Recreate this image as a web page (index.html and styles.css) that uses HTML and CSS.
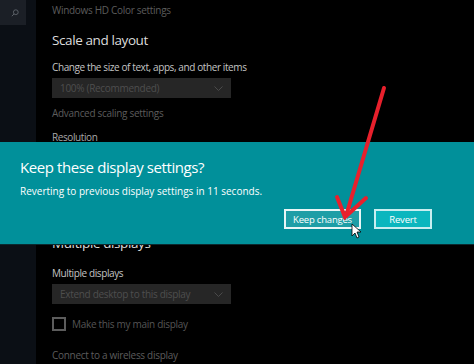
FILE: index.html
```html
<!DOCTYPE html>
<html>
<head>
<meta charset="utf-8">
<link rel="stylesheet" href="styles.css">
</head>
<body>
<div class="screen">
  <aside class="sidebar">
    <div class="search">
      <svg width="8" height="8" viewBox="0 0 8 8"><circle cx="4.8" cy="3.2" r="2.4" fill="none" stroke="#5a5f66" stroke-width="1"/><line x1="3" y1="5" x2="0.8" y2="7.2" stroke="#5a5f66" stroke-width="1"/></svg>
    </div>
  </aside>
  <main class="content">
    <div class="link-dim first">Windows HD Color settings</div>
    <h2 class="heading scale">Scale and layout</h2>
    <div class="label first-label">Change the size of text, apps, and other items</div>
    <div class="select"><span>100% (Recommended)</span><svg width="9" height="5" viewBox="0 0 9 5"><polyline points="0.5,0.5 4.5,4.5 8.5,0.5" fill="none" stroke="#4a4a4a" stroke-width="1"/></svg></div>
    <div class="link-dim adv">Advanced scaling settings</div>
    <div class="label res">Resolution</div>
    <h2 class="heading multi">Multiple displays</h2>
    <div class="label multi-label">Multiple displays</div>
    <div class="select"><span>Extend desktop to this display</span><svg width="9" height="5" viewBox="0 0 9 5"><polyline points="0.5,0.5 4.5,4.5 8.5,0.5" fill="none" stroke="#4a4a4a" stroke-width="1"/></svg></div>
    <label class="check"><span class="box"></span><span>Make this my main display</span></label>
    <div class="link-dim wireless">Connect to a wireless display</div>
  </main>

  <div class="dialog">
    <div class="dialog-title">Keep these display settings?</div>
    <div class="dialog-text">Reverting to previous display settings in 11 seconds.</div>
    <div class="dialog-actions">
      <button class="btn btn-keep">Keep changes</button>
      <button class="btn btn-revert">Revert</button>
    </div>
  </div>

  <svg class="annot" width="474" height="364" viewBox="0 0 474 364">
    <g stroke="#e8202c" stroke-width="4" stroke-linecap="round" fill="none">
      <line x1="384" y1="88" x2="346" y2="216"/>
      <polyline points="337,197 345,217 366,198"/>
    </g>
    <path d="M352 224 L352 236 L355 233 L357 238 L359 237 L357 232 L361 232 Z" fill="#fff" stroke="#000" stroke-width="0.8"/>
  </svg>
</div>
</body>
</html>
```
FILE: styles.css
```css
* { box-sizing: border-box; }
html, body { margin: 0; padding: 0; background: #000; }
body { font-family: "Open Sans", "Noto Sans", sans-serif; width: 474px; height: 364px; overflow: hidden; }
.screen { position: relative; display: flex; width: 474px; height: 364px; }
.sidebar { width: 36px; flex: none; background: #0b0f15; }
.search { width: 26px; height: 25px; background: #1b1f26; display: flex; align-items: center; justify-content: flex-end; padding-right: 7px; }
.content { flex: 1; padding-left: 16px; display: flex; flex-direction: column; align-items: flex-start; }
.link-dim { font-size: 10px; color: #5c5c5c; line-height: 14px; letter-spacing: -0.3px; }
.first { margin-top: 3px; }
.heading { margin: 0; font-weight: 400; font-size: 13.5px; line-height: 20px; color: #dcdcdc; letter-spacing: -0.4px; }
.scale { margin-top: 13px; }
.label { font-size: 10px; line-height: 14px; color: #c4c4c4; letter-spacing: -0.4px; }
.first-label { margin-top: 10px; }
.select { margin-top: 4px; width: 179px; height: 20px; background: #262626; display: flex; align-items: center; justify-content: space-between; padding: 0 8px; font-size: 10px; color: #4e4e4e; letter-spacing: -0.3px; }
.adv { margin-top: 8px; }
.res { margin-top: 10px; color: #a8a8a8; }
.multi { margin-top: 89px; }
.multi-label { margin-top: 13px; }
.check { margin-top: 13px; display: flex; align-items: center; gap: 6px; font-size: 10px; color: #555; line-height: 14px; letter-spacing: -0.3px; }
.box { width: 14px; height: 14px; border: 2px solid #5c5c5c; }
.wireless { margin-top: 17px; }
.dialog { position: absolute; left: 0; top: 142px; width: 474px; height: 103px; background: #01909a; border-bottom: 1px solid #0a2a30; padding: 14px 0 0 20px; color: #fff; }
.dialog-title { font-size: 15px; line-height: 22px; font-weight: 400; letter-spacing: -0.4px; }
.dialog-text { font-size: 10px; line-height: 14px; margin-top: 6px; }
.dialog-actions { position: absolute; left: 284px; top: 67px; display: flex; gap: 13px; }
.btn { font-family: inherit; font-size: 9.5px; letter-spacing: -0.2px; color: #fff; height: 20px; border: 2px solid #e8f6f6; padding: 0; }
.btn-keep { width: 77px; background: #1e9ea6; }
.btn-revert { width: 58px; background: #0bb6be; border-color: #c8eef0; }
.annot { position: absolute; left: 0; top: 0; pointer-events: none; }
```
